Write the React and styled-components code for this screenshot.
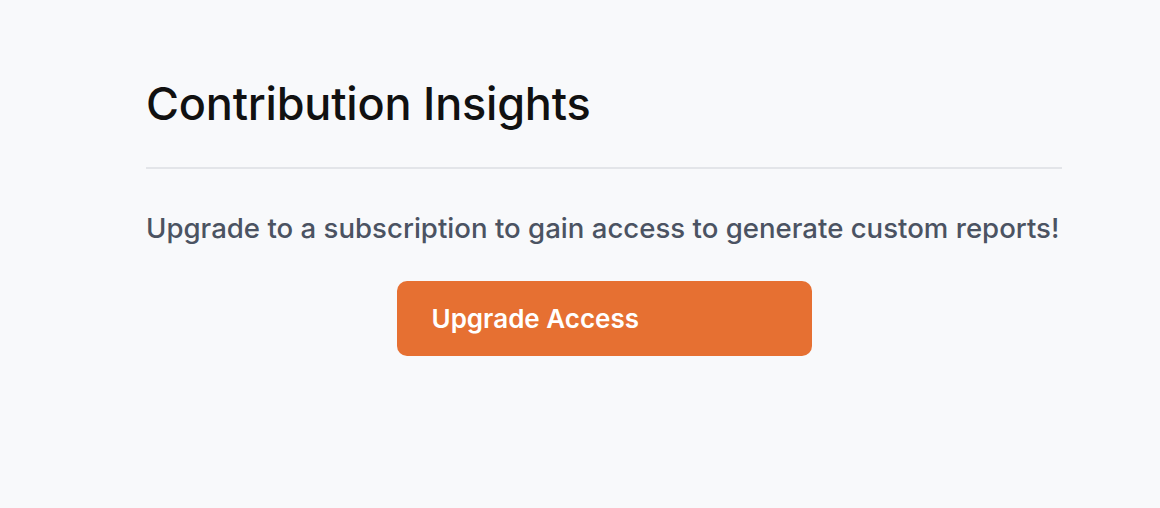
import React from 'react';
import styled, { createGlobalStyle } from 'styled-components';

const GlobalStyle = createGlobalStyle`
  html, body {
    margin: 0;
    padding: 0;
    background: #f8f9fb;
  }
  body {
    font-family: Inter, "Noto Sans", sans-serif;
  }
`;

const Page = styled.main`
  min-height: 508px;
  padding: 76px 98px 0 146px;
  box-sizing: border-box;
`;

const Section = styled.section`
  width: 916px;
  display: flex;
  flex-direction: column;
`;

const Title = styled.h1`
  margin: 0;
  font-size: 45px;
  font-weight: 500;
  line-height: 56px;
  color: #111111;
  letter-spacing: -0.2px;
  white-space: nowrap;
`;

const Divider = styled.hr`
  margin: 35px 0 0;
  border: none;
  border-top: 2px solid #e3e5e9;
`;

const Message = styled.p`
  margin: 41px 0 0;
  font-size: 27.6px;
  font-weight: 500;
  line-height: 36px;
  color: #4b5362;
  white-space: nowrap;
`;

const UpgradeButton = styled.button`
  align-self: center;
  margin-top: 35px;
  width: 415px;
  height: 75px;
  padding: 0 35px;
  border: none;
  border-radius: 10px;
  background: #e67032;
  color: #ffffff;
  font-family: inherit;
  font-size: 26px;
  font-weight: 600;
  text-align: left;
  cursor: pointer;
`;

const App = () => {
  return (
    <>
      <GlobalStyle />
      <Page>
        <Section>
          <Title>Contribution Insights</Title>
          <Divider />
          <Message>Upgrade to a subscription to gain access to generate custom reports!</Message>
          <UpgradeButton>Upgrade Access</UpgradeButton>
        </Section>
      </Page>
    </>
  );
};

export default App;
